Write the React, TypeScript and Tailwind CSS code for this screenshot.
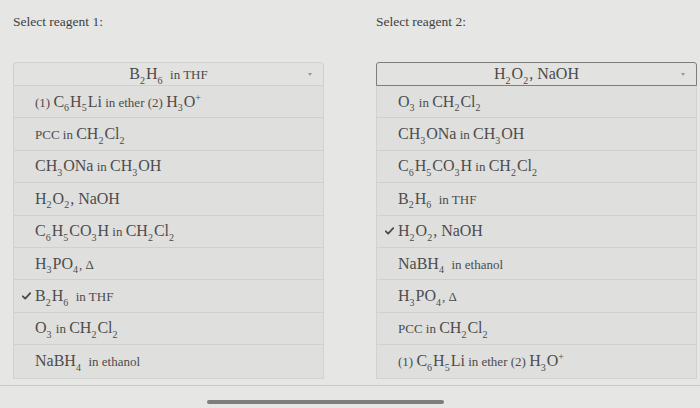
import React from "react";

const F = ({ children }: { children: React.ReactNode }) => (
  <span className="text-[16px]">{children}</span>
);
const S = ({ children }: { children: React.ReactNode }) => (
  <span className="text-[13px]">{children}</span>
);
const Sub = ({ children }: { children: React.ReactNode }) => (
  <sub className="text-[10px] bottom-[-0.45em] pr-[1px]">{children}</sub>
);
const Sup = ({ children }: { children: React.ReactNode }) => (
  <sup className="text-[10px] top-[-0.6em]">{children}</sup>
);

const items: Record<string, React.ReactNode> = {
  c6h5li: (
    <>
      <S>(1)&nbsp;</S>
      <F>
        C<Sub>6</Sub>H<Sub>5</Sub>Li
      </F>
      <S> in ether (2) </S>
      <F>
        H<Sub>3</Sub>O<Sup>+</Sup>
      </F>
    </>
  ),
  pcc: (
    <>
      <S>PCC in </S>
      <F>
        CH<Sub>2</Sub>Cl<Sub>2</Sub>
      </F>
    </>
  ),
  ch3ona: (
    <>
      <F>
        CH<Sub>3</Sub>ONa
      </F>
      <S> in </S>
      <F>
        CH<Sub>3</Sub>OH
      </F>
    </>
  ),
  h2o2: (
    <>
      <F>
        H<Sub>2</Sub>O<Sub>2</Sub>, NaOH
      </F>
    </>
  ),
  peracid: (
    <>
      <F>
        C<Sub>6</Sub>H<Sub>5</Sub>CO<Sub>3</Sub>H
      </F>
      <S> in </S>
      <F>
        CH<Sub>2</Sub>Cl<Sub>2</Sub>
      </F>
    </>
  ),
  h3po4: (
    <>
      <F>
        H<Sub>3</Sub>PO<Sub>4</Sub>
      </F>
      <S>, Δ</S>
    </>
  ),
  b2h6: (
    <>
      <F>
        B<Sub>2</Sub>H<Sub>6</Sub>
      </F>
      <S>&nbsp; in THF</S>
    </>
  ),
  o3: (
    <>
      <F>
        O<Sub>3</Sub>
      </F>
      <S> in </S>
      <F>
        CH<Sub>2</Sub>Cl<Sub>2</Sub>
      </F>
    </>
  ),
  nabh4: (
    <>
      <F>
        NaBH<Sub>4</Sub>
      </F>
      <S>&nbsp; in ethanol</S>
    </>
  ),
};

const Check = () => (
  <svg width="9" height="8" viewBox="0 0 9 8" className="shrink-0">
    <path d="M0.8 4.3 L3.2 6.6 L8.2 1.2" fill="none" stroke="#4a4a4a" strokeWidth="1.8" strokeLinecap="round" strokeLinejoin="round" />
  </svg>
);

function Select({
  label,
  selected,
  order,
  width,
  focused,
}: {
  label: string;
  selected: string;
  order: string[];
  width: string;
  focused?: boolean;
}) {
  return (
    <div className={`flex flex-col ${width}`}>
      <div className="h-[44px] pt-[14px] text-[13.5px] leading-[16px] text-[#3f3f3f]">{label}</div>
      <div className="mt-[18px] flex flex-col">
        <div
          className={`relative flex h-[24px] items-center justify-center rounded-t-[3px] border bg-[#e2e2e1] text-[#4a4a4a] ${
            focused ? "border-[#7d7d80]" : "border-[#cfcfce]"
          }`}
        >
          <span className="leading-none">{items[selected]}</span>
          <span className="absolute right-[11px] top-[10px] h-0 w-0 border-x-[2.5px] border-t-[3px] border-x-transparent border-t-[#9a9a9a]" />
        </div>
        <div className="flex flex-col border-x border-b border-[#d2d2d1] bg-[#dfdfde]">
          {order.map((k) => (
            <div
              key={k}
              className="flex h-[32.4px] items-center border-b border-[#d0d0cf] text-[#4c4c4c] last:border-b-0"
            >
              <div className="flex w-[21px] justify-end pr-[4px]">{k === selected ? <Check /> : null}</div>
              <span className="whitespace-nowrap leading-none">{items[k]}</span>
            </div>
          ))}
        </div>
      </div>
    </div>
  );
}

export default function App() {
  return (
    <div
      className="relative h-[408px] w-[700px] overflow-hidden bg-[#e6e6e4]"
      style={{ fontFamily: '"Liberation Serif", "Times New Roman", serif' }}
    >
      <div className="flex h-[385px] pl-[13px]">
        <Select
          label="Select reagent 1:"
          selected="b2h6"
          order={["c6h5li", "pcc", "ch3ona", "h2o2", "peracid", "h3po4", "b2h6", "o3", "nabh4"]}
          width="w-[311px]"
        />
        <div className="w-[52px]" />
        <Select
          label="Select reagent 2:"
          selected="h2o2"
          order={["o3", "ch3ona", "peracid", "b2h6", "h2o2", "nabh4", "h3po4", "pcc", "c6h5li"]}
          width="w-[321px]"
          focused
        />
      </div>
      <div className="h-[1px] w-full bg-[#c9c9c7]" />
      <div className="flex pl-[207px] pt-[14px]">
        <div className="h-[4px] w-[237px] rounded-full bg-[#7e7e7e]" />
      </div>
    </div>
  );
}
